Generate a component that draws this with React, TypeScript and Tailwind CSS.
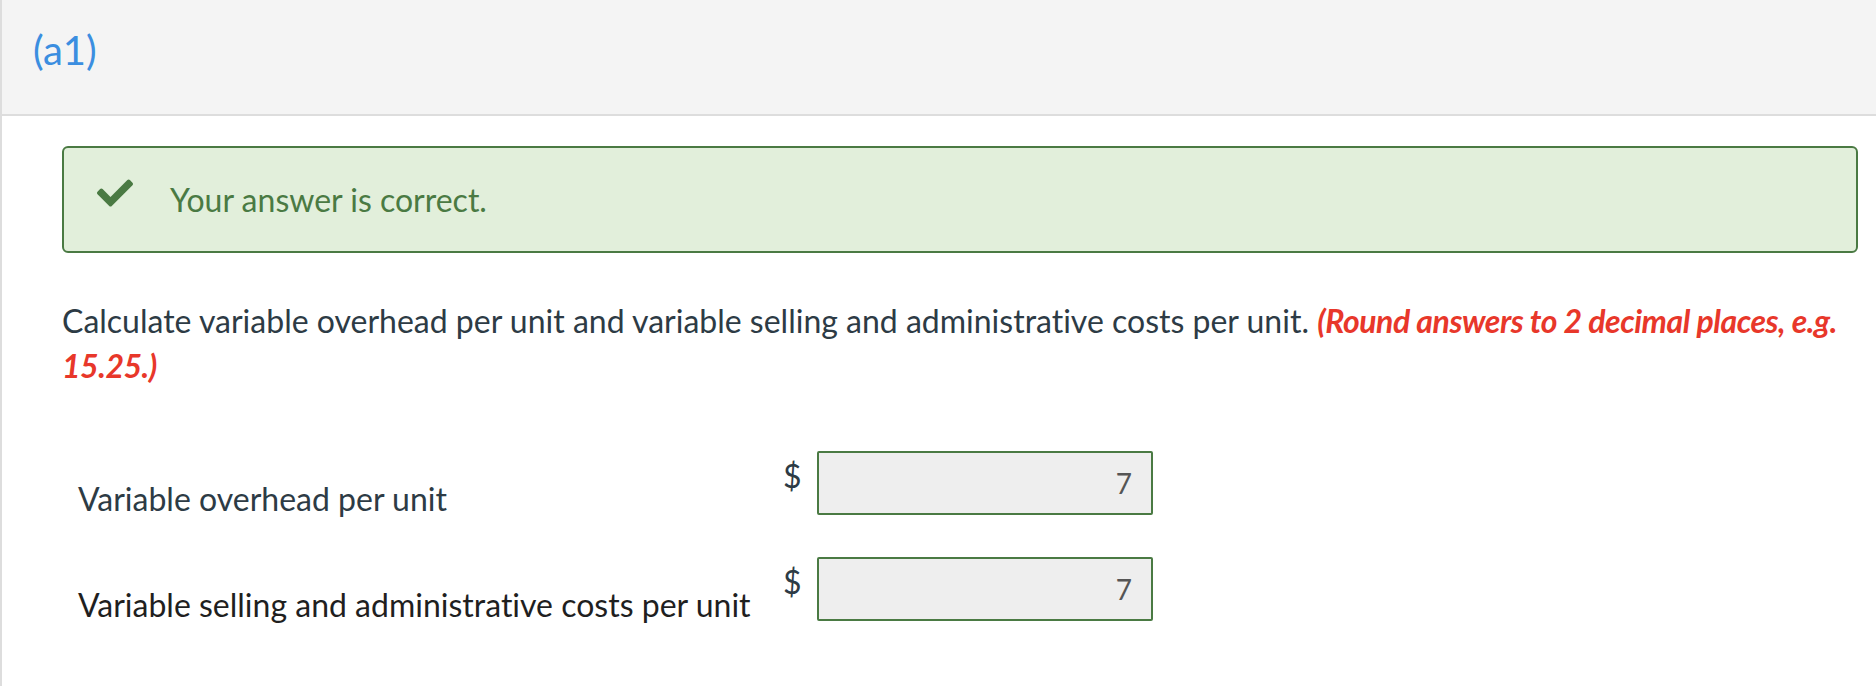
import React from "react";

const font = { fontFamily: "Lato, 'Open Sans', Arial, sans-serif" };

function CheckIcon() {
  return (
    <svg viewBox="0 0 512 512" className="w-[36px] h-[36px] shrink-0 mb-[14px]" fill="#4a7a43">
      <path d="M173.898 439.404l-166.4-166.4c-9.997-9.997-9.997-26.206 0-36.204l36.203-36.204c9.997-9.998 26.207-9.998 36.204 0L192 312.69 432.095 72.596c9.997-9.997 26.207-9.997 36.204 0l36.203 36.204c9.997 9.997 9.997 26.206 0 36.204l-294.4 294.401c-9.998 9.997-26.207 9.997-36.204-.001z" />
    </svg>
  );
}

function AnswerRow({ label, value, labelClass }: { label: string; value: string; labelClass: string }) {
  return (
    <div className="flex items-end pl-[16px]">
      <div className={`w-[705px] text-[32px] leading-[33px] ${labelClass}`}>{label}</div>
      <div className="w-[34px] self-start pt-[5px] text-[32px] leading-[40px] text-[#2d3b45]">$</div>
      <div className="w-[336px] h-[64px] border-2 border-[#4a7a43] rounded-[2px] bg-[#eeeeee] flex items-center justify-end pr-[19px] text-[28px] text-[#555555]">
        {value}
      </div>
    </div>
  );
}

export default function App() {
  return (
    <div
      className="w-[1876px] h-[686px] bg-white border-l-2 border-[#dddddd] [font-variant-ligatures:none]"
      style={font}
    >
      <div className="h-[116px] bg-[#f4f4f4] border-b-2 border-[#dddddd] flex items-center pl-[31px] pb-[15px]">
        <span className="text-[40px] leading-none text-[#3b8ee0]">(a1)</span>
      </div>
      <div className="pl-[60px] pr-[18px] pt-[30px]">
        <div className="h-[107px] border-2 border-[#4a7a43] rounded-[6px] bg-[#e2efdb] flex items-center pl-[33px]">
          <CheckIcon />
          <span className="ml-[37px] text-[32px] text-[#4a7a43]">Your answer is correct.</span>
        </div>
        <p className="mt-[45px] text-[32px] leading-[45px] text-[#2d3b45]">
          Calculate variable overhead per unit and variable selling and administrative costs per unit.{" "}
          <strong className="font-bold italic tracking-[-0.45px] text-[#e8372a]">
            (Round answers to 2 decimal places, e.g. 15.25.)
          </strong>
        </p>
        <div className="mt-[63px] flex flex-col gap-[42px]">
          <AnswerRow label="Variable overhead per unit" value="7" labelClass="text-[#2d3b45]" />
          <AnswerRow label="Variable selling and administrative costs per unit" value="7" labelClass="text-[#1f1f1f]" />
        </div>
      </div>
    </div>
  );
}
